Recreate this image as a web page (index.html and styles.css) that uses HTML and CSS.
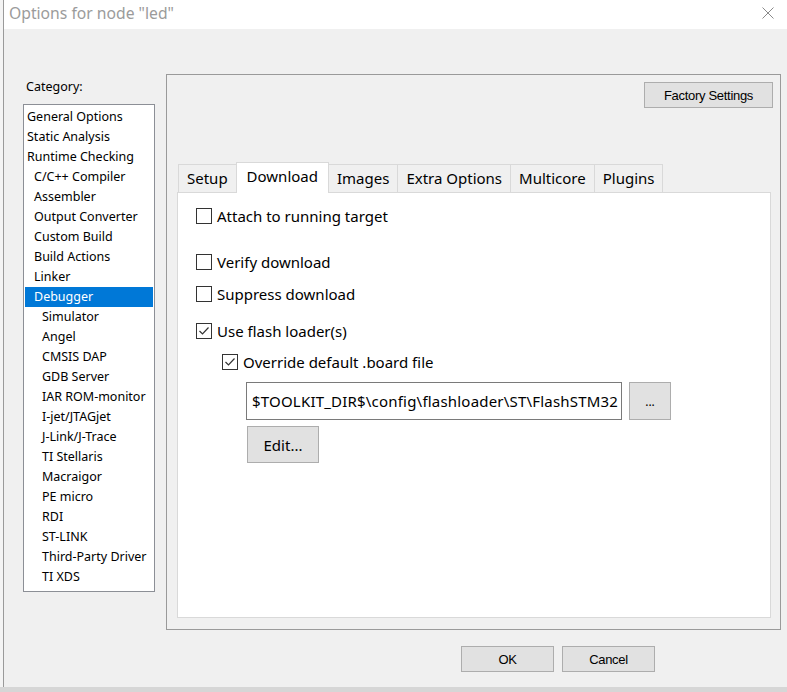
FILE: index.html
```html
<!DOCTYPE html>
<html lang="en">
<head>
    <meta charset="UTF-8">
    <meta name="viewport" content="width=device-width, initial-scale=1.0">
    <title>Options for node "led"</title>
    <link rel="stylesheet" href="styles.css">
</head>
<body>
<div class="screen">
    <div class="dialog">
        <div class="titlebar">
            <span class="title">Options for node "led"</span>
            <svg class="close" width="12" height="12" viewBox="0 0 12 12">
                <path d="M0.5 0.5 L11.5 11.5 M11.5 0.5 L0.5 11.5" stroke="#8a8a8a" stroke-width="1" fill="none"/>
            </svg>
        </div>

        <div class="dialog-body">
            <div class="main">
                <div class="category">
                    <div class="category-label">Category:</div>
                    <ul class="category-list">
                        <li class="lvl0">General Options</li>
                        <li class="lvl0">Static Analysis</li>
                        <li class="lvl0">Runtime Checking</li>
                        <li class="lvl1">C/C++ Compiler</li>
                        <li class="lvl1">Assembler</li>
                        <li class="lvl1">Output Converter</li>
                        <li class="lvl1">Custom Build</li>
                        <li class="lvl1">Build Actions</li>
                        <li class="lvl1">Linker</li>
                        <li class="lvl1 selected">Debugger</li>
                        <li class="lvl2">Simulator</li>
                        <li class="lvl2">Angel</li>
                        <li class="lvl2">CMSIS DAP</li>
                        <li class="lvl2">GDB Server</li>
                        <li class="lvl2">IAR ROM-monitor</li>
                        <li class="lvl2">I-jet/JTAGjet</li>
                        <li class="lvl2">J-Link/J-Trace</li>
                        <li class="lvl2">TI Stellaris</li>
                        <li class="lvl2">Macraigor</li>
                        <li class="lvl2">PE micro</li>
                        <li class="lvl2">RDI</li>
                        <li class="lvl2">ST-LINK</li>
                        <li class="lvl2">Third-Party Driver</li>
                        <li class="lvl2">TI XDS</li>
                    </ul>
                </div>

                <div class="panel">
                    <div class="panel-top">
                        <button class="btn factory">Factory Settings</button>
                    </div>
                    <div class="tabs">
                        <div class="tab">Setup</div>
                        <div class="tab active">Download</div>
                        <div class="tab">Images</div>
                        <div class="tab">Extra Options</div>
                        <div class="tab">Multicore</div>
                        <div class="tab">Plugins</div>
                    </div>
                    <div class="tab-page">
                        <div class="check row-attach">
                            <span class="box"></span>Attach to running target
                        </div>
                        <div class="check row-verify">
                            <span class="box"></span>Verify download
                        </div>
                        <div class="check row-suppress">
                            <span class="box"></span>Suppress download
                        </div>
                        <div class="check row-flash">
                            <span class="box"><svg width="14" height="14" viewBox="0 0 14 14"><path d="M2.5 7 L5.5 10 L11.5 3.5" stroke="#333" stroke-width="1.2" fill="none"/></svg></span>Use flash loader(s)
                        </div>
                        <div class="check row-override">
                            <span class="box"><svg width="14" height="14" viewBox="0 0 14 14"><path d="M2.5 7 L5.5 10 L11.5 3.5" stroke="#333" stroke-width="1.2" fill="none"/></svg></span>Override default .board file
                        </div>
                        <div class="path-row">
                            <div class="path-input">$TOOLKIT_DIR$\config\flashloader\ST\FlashSTM32</div>
                            <button class="btn browse">...</button>
                        </div>
                        <button class="btn edit">Edit...</button>
                    </div>
                </div>
            </div>

            <div class="footer">
                <button class="btn dlg-btn">OK</button>
                <button class="btn dlg-btn">Cancel</button>
            </div>
        </div>
    </div>
</div>
</body>
</html>
```

FILE: styles.css
```css
html, body {
    margin: 0;
    padding: 0;
}
body {
    width: 787px;
    height: 692px;
    overflow: hidden;
    background-color: #d6d6d6;
    font-family: "Noto Sans", "Open Sans", sans-serif;
    color: #000;
}
.screen {
    height: 687px;
    padding-left: 3px;
    background-color: #f4f4f4;
}
.dialog {
    height: 687px;
    border-left: 1px solid #9a9a9a;
    background-color: #f0f0f0;
    display: flex;
    flex-direction: column;
}

/* title bar */
.titlebar {
    height: 29px;
    background: white;
    display: flex;
    align-items: center;
    justify-content: space-between;
    padding: 0 13px 0 5px;
}
.title {
    font-size: 15.7px;
    color: #9b9b9b;
    margin-top: -4px;
}
.close {
    margin-top: -3px;
}

.dialog-body {
    flex: 1;
    display: flex;
    flex-direction: column;
}
.main {
    display: flex;
    align-items: flex-start;
    padding-top: 45px;
}

/* category list */
.category {
    margin-left: 19px;
    width: 132px;
}
.category-label {
    font-size: 12.5px;
    line-height: 26px;
    height: 26px;
    margin-bottom: 4px;
    padding-left: 3px;
}
.category-list {
    list-style: none;
    margin: 0;
    padding: 2px 1px;
    height: 488px;
    box-sizing: border-box;
    background: white;
    border: 1px solid #8c8f96;
}
.category-list li {
    height: 20px;
    line-height: 20px;
    font-size: 12.5px;
    white-space: nowrap;
}
.lvl0 { padding-left: 2px; }
.lvl1 { padding-left: 9px; }
.lvl2 { padding-left: 17px; }
.category-list li.selected {
    background-color: #0078d7;
    color: white;
}

/* right panel */
.panel {
    margin-left: 11px;
    width: 615px;
    height: 556px;
    box-sizing: border-box;
    border: 1px solid #9a9a9a;
    padding-left: 10px;
}
.panel-top {
    height: 87px;
    display: flex;
    justify-content: flex-end;
    align-items: flex-start;
    padding-right: 7px;
}
.btn {
    background-color: #e1e1e1;
    border: 1px solid #adadad;
    font-family: "Noto Sans", sans-serif;
    font-size: 15px;
    color: #000;
    padding: 0;
    box-sizing: border-box;
}
.factory {
    margin-top: 7px;
    width: 129px;
    height: 26px;
    font-family: "Liberation Sans", sans-serif;
    font-size: 13px;
    letter-spacing: -0.3px;
}

/* tabs */
.tabs {
    height: 30px;
    display: flex;
    align-items: flex-end;
    padding-left: 2px;
    position: relative;
    z-index: 1;
}
.tab {
    height: 28px;
    box-sizing: border-box;
    line-height: 27px;
    padding: 0 8px;
    font-size: 15px;
    background-color: #f0f0f0;
    border: 1px solid #d9d9d9;
    border-bottom: none;
    margin-left: -1px;
}
.tab.active {
    height: 31px;
    line-height: 26px;
    background: white;
    padding: 0 10px;
    margin-bottom: -1px;
    border-color: #d9d9d9;
}
.tab-page {
    width: 594px;
    height: 426px;
    box-sizing: border-box;
    background: white;
    border: 1px solid #d9d9d9;
    padding: 15px 0 0 18px;
    display: flex;
    flex-direction: column;
    align-items: flex-start;
}

/* checkboxes */
.check {
    display: flex;
    align-items: center;
    height: 16px;
    font-size: 15px;
    white-space: nowrap;
}
.box {
    width: 16px;
    height: 16px;
    box-sizing: border-box;
    border: 1px solid #333;
    margin-right: 5px;
    display: flex;
    align-items: center;
    justify-content: center;
    background: white;
}
.row-verify { margin-top: 30px; }
.row-suppress { margin-top: 16px; }
.row-flash { margin-top: 21px; }
.row-override {
    margin-top: 15px;
    margin-left: 26px;
}

.path-row {
    display: flex;
    margin-top: 12px;
    margin-left: 50px;
}
.path-input {
    width: 376px;
    height: 38px;
    box-sizing: border-box;
    border: 1px solid #7a7a7a;
    padding: 0 5px;
    line-height: 36px;
    font-size: 15px;
    letter-spacing: 0.2px;
    white-space: nowrap;
    overflow: hidden;
}
.browse {
    margin-left: 7px;
    width: 42px;
    height: 38px;
    font-size: 12px;
}
.edit {
    margin-top: 6px;
    margin-left: 51px;
    width: 72px;
    height: 37px;
}

/* bottom buttons */
.footer {
    display: flex;
    gap: 8px;
    margin-top: 16px;
    padding-left: 457px;
}
.dlg-btn {
    width: 93px;
    height: 26px;
    font-family: "Liberation Sans", sans-serif;
    font-size: 13px;
    letter-spacing: -0.3px;
}
```
